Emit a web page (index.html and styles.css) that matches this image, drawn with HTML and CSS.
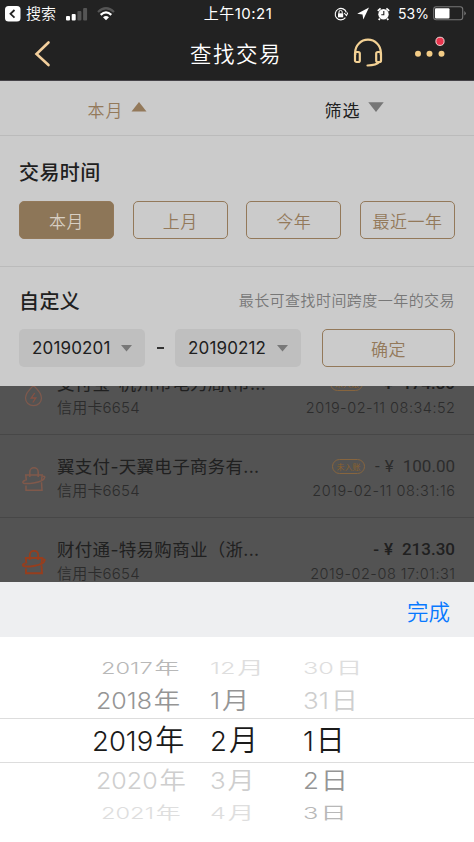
FILE: index.html
```html
<!DOCTYPE html>
<html lang="zh-CN">
<head>
<meta charset="utf-8">
<title>查找交易</title>
<link rel="stylesheet" href="styles.css">
</head>
<body>
<div class="phone">
  <header class="top">
    <div class="status">
      <div class="status-left">
        <svg width="16" height="16" viewBox="0 0 16 16"><rect width="15.5" height="15.5" rx="3.5" fill="#fff"/><path d="M9.5 4 5.5 7.8l4 3.8" fill="none" stroke="#222" stroke-width="1.8"/></svg>
        <span class="search">搜索</span>
        <svg class="signal" width="22" height="14" viewBox="0 0 22 14"><rect y="9" width="4" height="4.5" rx="1" fill="#fff"/><rect x="5.7" y="7" width="4" height="6.5" rx="1" fill="#fff"/><rect x="11.4" y="4" width="4" height="9.5" rx="1" fill="#555"/><rect x="17.1" y="1" width="4" height="12.5" rx="1" fill="#555"/></svg>
        <svg class="wifi" width="18" height="14" viewBox="0 0 18 14"><path d="M1 5q8-7.5 16 0" fill="none" stroke="#555" stroke-width="2.2"/><path d="M3.7 7.9q5.3-4.9 10.6 0" fill="none" stroke="#fff" stroke-width="2.2"/><path d="M6 10.2q3-2.5 6 0l-3 3z" fill="#fff"/></svg>
      </div>
      <span class="clock">上午10:21</span>
      <div class="status-right">
        <svg width="14" height="14" viewBox="0 0 14 14" fill="none" stroke="#fff"><path d="M11.4 10.7A5.7 5.7 0 1 1 12.4 5.5" stroke-width="1.1"/><path d="m10.2 6 2.2 2.5L14 5.6" stroke-width="1.1"/><rect x="4" y="6.3" width="5.2" height="4" fill="#fff" stroke="none"/><path d="M5 6.5V5a1.6 1.6 0 0 1 3.2 0v1.5"/></svg>
        <svg class="arrow" width="12" height="13" viewBox="0 0 12 13"><path d="M12 .5.2 6.8l5.3.6.8 5.1z" fill="#fff"/></svg>
        <svg class="alarm" width="13" height="14" viewBox="0 0 13 14"><circle cx="6.5" cy="7.3" r="5.2" fill="#fff"/><path d="M.8 3.8 3.6 1.3M9.4 1.3l2.8 2.5M2.8 11.5l-1 1.5M10.2 11.5l1 1.5" stroke="#fff" stroke-width="1.8"/><path d="M6.8 4v3.8H4.3" fill="none" stroke="#222" stroke-width="1.1"/></svg>
        <span class="percent">53%</span>
        <svg class="battery" width="34" height="15" viewBox="0 0 34 15"><rect x=".7" y=".8" width="29" height="13" rx="2.5" fill="none" stroke="#777" stroke-width="1.1"/><rect x="2" y="2.2" width="14.5" height="10.2" rx="1" fill="#fff"/><path d="M31.3 5q3 2.3 0 4.6z" fill="#777"/></svg>
      </div>
    </div>
    <nav class="nav">
      <svg class="back" width="18" height="28" viewBox="0 0 18 28"><path d="M14.5 2.5 2.5 14l12 11" fill="none" stroke="#f3cf9d" stroke-width="2.6" stroke-linecap="round"/></svg>
      <h1>查找交易</h1>
      <svg class="headset" width="30" height="30" viewBox="0 0 30 30" fill="none" stroke="#f3d194" stroke-width="2.2"><path d="M2.2 17v-2.5a12.8 12.8 0 0 1 25.6 0V17"/><rect x="2" y="14" width="4.8" height="10" rx="1.6"/><rect x="23.2" y="14" width="4.8" height="10" rx="1.6"/><path d="M26.3 24q-2.8 3.3-11.8 3.5" stroke-linecap="round"/></svg>
      <svg class="more" width="32" height="24" viewBox="0 0 32 24"><g fill="#f3cc86"><circle cx="4" cy="17.7" r="3"/><circle cx="15.5" cy="17.7" r="3"/><circle cx="27.5" cy="17.7" r="3"/></g><circle cx="26" cy="5.3" r="4.1" fill="#e9354e" stroke="#f4d9d9" stroke-width="1"/></svg>
    </nav>
  </header>

  <section class="panel">
    <div class="tabs">
      <div class="tab active"><span>本月</span><svg width="16" height="10" viewBox="0 0 16 10"><path d="m8 0 7.5 9.5H.5z" fill="#93795a"/></svg></div>
      <div class="tab"><span>筛选</span><svg width="16" height="10" viewBox="0 0 16 10"><path d="M.3.3h15.4L8 10z" fill="#767676"/></svg></div>
    </div>
    <h2 class="time-title">交易时间</h2>
    <div class="ranges">
      <button class="selected">本月</button><button>上月</button><button>今年</button><button>最近一年</button>
    </div>
    <div class="custom">
      <div class="custom-head"><h2>自定义</h2><span>最长可查找时间跨度一年的交易</span></div>
      <div class="dates">
        <div class="date"><span>20190201</span><svg width="11" height="7" viewBox="0 0 11 7"><path d="M0 0h11L5.5 6.5z" fill="#787878"/></svg></div>
        <span class="dash"></span>
        <div class="date"><span>20190212</span><svg width="11" height="7" viewBox="0 0 11 7"><path d="M0 0h11L5.5 6.5z" fill="#787878"/></svg></div>
        <button class="confirm">确定</button>
      </div>
    </div>
  </section>

  <section class="list">
    <article class="row pending">
      <svg class="icon" width="24" height="26" viewBox="0 0 24 26" fill="none" stroke="#7d594d" stroke-width="1.3"><path d="M11.5 1.5Q3.5 9 3.5 14a8 7.7 0 0 0 16 0q0-5-8-12.5z"/><path d="m12.7 9-3.5 5h4.6l-3 4.5" stroke="#865244"/></svg>
      <div class="info"><strong>支付宝-杭州市电力局(市...</strong><span>信用卡6654</span></div>
      <div class="cost"><div><em>未入账</em><b><i>-</i>¥<u>174.30</u></b></div><time>2019-02-11 08:34:52</time></div>
    </article>
    <article class="row pending">
      <svg class="icon" width="24" height="26" viewBox="0 0 24 26" fill="none" stroke="#80594b" stroke-width="1.5"><path d="M4.3 13.5 3.8 8h16.4l-.6 5M4 18.5v4.8h16l-.5-8M7.8 10V5a4.2 4.2 0 0 1 8.4 0v5"/><path d="M3.6 13.3Q.4 14.1 1 15.6c.5 2 20.6.7 21.7-5.2.3-1-1-1.2-2.2-1.2"/></svg>
      <div class="info"><strong>翼支付-天翼电子商务有...</strong><span>信用卡6654</span></div>
      <div class="cost"><div><em>未入账</em><b><i>-</i>¥<u>100.00</u></b></div><time>2019-02-11 08:31:16</time></div>
    </article>
    <article class="row">
      <svg class="icon" width="24" height="26" viewBox="0 0 24 26" fill="none" stroke="#963e1e" stroke-width="1.9"><path d="M4.3 13.5 3.8 8h16.4l-.6 5M4 18.5v4.8h16l-.5-8M7.8 10V5a4.2 4.2 0 0 1 8.4 0v5"/><path d="M3.6 13.3Q.4 14.1 1 15.6c.5 2 20.6.7 21.7-5.2.3-1-1-1.2-2.2-1.2"/></svg>
      <div class="info"><strong>财付通-特易购商业（浙...</strong><span>信用卡6654</span></div>
      <div class="cost"><div><b><i>-</i>¥<u>213.30</u></b></div><time>2019-02-08 17:01:31</time></div>
    </article>
  </section>

  <section class="sheet">
    <div class="toolbar"><span>完成</span></div>
    <div class="picker">
      <div class="option far above"><span>2017<small>年</small></span><span>12<small>月</small></span><span>30<small>日</small></span></div>
      <div class="option near above"><span>2018<small>年</small></span><span>1<small>月</small></span><span>31<small>日</small></span></div>
      <div class="option current"><span>2019<small>年</small></span><span>2<small>月</small></span><span>1<small>日</small></span></div>
      <div class="option near below"><span>2020<small>年</small></span><span>3<small>月</small></span><span>2<small>日</small></span></div>
      <div class="option far below"><span>2021<small>年</small></span><span>4<small>月</small></span><span>3<small>日</small></span></div>
    </div>
  </section>
</div>
</body>
</html>
```
FILE: styles.css
```css
* { box-sizing: border-box; }
body { margin: 0; background: #fff; font-family: Inter, "Noto Sans CJK SC", sans-serif; }
h1, h2 { margin: 0; font-weight: 400; }
svg { display: block; flex: none; }
button { font: inherit; padding: 0; background: none; }
.phone { width: 474px; height: 842px; display: flex; flex-direction: column; overflow: hidden; }

.top { height: 81px; flex: none; background: #222; color: #fff; border-bottom: 1px solid #454348; }
.status { height: 27px; display: grid; grid-template-columns: 1fr auto 1fr; align-items: center; padding: 0 7px 0 5px; font-size: 14px; }
.status-left, .status-right { display: flex; align-items: center; }
.status-right { justify-content: flex-end; }
.search { margin-left: 5px; font-size: 15px; line-height: 20px; font-weight: 350; }
.signal { margin-left: 10px; }
.wifi { margin-left: 9px; }
.clock { font-size: 15px; letter-spacing: .5px; line-height: 20px; padding-left: 4px; }
.arrow { margin-left: 9px; }
.alarm { margin-left: 8px; }
.percent { margin-left: 8px; font-size: 14px; }
.battery { margin-left: 4px; }
.nav { height: 53px; display: grid; grid-template-columns: 156px 163px 30px 1fr; align-items: center; padding: 0 28px 0 34px; }
.nav h1 { font-size: 21.5px; letter-spacing: 1.5px; line-height: 30px; font-weight: 350; }
.headset { margin-top: -2px; }
.more { justify-self: end; margin-top: -12px; }

.panel { height: 305px; flex: none; background: #cbcbcb; color: #202020; }
.tabs { height: 55px; display: grid; grid-template-columns: 1fr 1fr; border-bottom: 1px solid #bbb; }
.tab { display: flex; align-items: center; justify-content: center; gap: 7px; font-size: 17px; letter-spacing: 1px; padding: 2px 3px 0 0; }
.tab svg { margin-top: -5px; }
.active { color: #93795a; font-weight: 350; }
h2 { font-size: 20px; line-height: 28px; letter-spacing: .4px; font-weight: 500; }
.time-title { padding: 23px 19px 0; height: 65px; }
.ranges { display: grid; grid-template-columns: repeat(4, 95px); justify-content: space-between; padding: 0 19px; }
.ranges button, .confirm { height: 38px; border: 1.5px solid #93795a; border-radius: 5px; color: #93795a; font-size: 17px; font-weight: 350; letter-spacing: .5px; }
.ranges .selected { background: #8d7658; color: #d8cfc3; }
.custom { margin-top: 27px; padding: 21px 19px 0; border-top: 1px solid #bbb; }
.custom-head { height: 41px; display: flex; justify-content: space-between; align-items: flex-start; }
.custom-head span { color: #777; font-size: 15px; line-height: 26px; letter-spacing: .45px; font-weight: 350; }
.dates { display: grid; grid-template-columns: 126px 30px 126px 1fr; align-items: center; }
.date { height: 38px; border-radius: 5px; background: #bfbfbf; display: flex; align-items: center; justify-content: space-between; padding: 0 13px; font-size: 17px; letter-spacing: .15px; }
.dash { width: 7px; height: 2px; background: #333; justify-self: center; }
.confirm { margin-left: 21px; }

.list { height: 196px; flex: none; overflow: hidden; background: #535353; color: #202020; }
.row { height: 83.5px; display: grid; grid-template-columns: 38px 1fr auto; padding: 19px 19px 0; border-bottom: 1px solid #474747; }
.row:first-child { margin-top: -35px; padding-top: 20px; }
.icon { margin: 13px 0 0 3px; }
.info, .cost { display: flex; flex-direction: column; }
.info strong { font-size: 17.5px; font-weight: 400; line-height: 25px; white-space: nowrap; letter-spacing: .3px; }
.info span { color: #2c2c2c; font-size: 15px; line-height: 24px; font-weight: 350; letter-spacing: .2px; }
.cost { align-items: flex-end; }
.cost div { height: 25px; display: flex; align-items: center; }
em { width: 33px; height: 15px; margin-right: 10px; border: 1px solid #87653e; border-radius: 8px; color: #8b612c; font: normal 8px/13px "Noto Sans CJK SC", sans-serif; text-align: center; }
b { font: 500 17px/25px Roboto, sans-serif; letter-spacing: 0; }
b i { font-style: normal; margin-right: 5px; }
b u { text-decoration: none; margin-left: 9px; }
.pending b { color: #2c2c2c; font-weight: 400; }
.row:first-child b { color: #202020; font-weight: 500; }
time { color: #2c2c2c; font-size: 14.5px; font-weight: 350; line-height: 24px; letter-spacing: .5px; margin-right: -.5px; }

.sheet { flex: 1; background: #fff; }
.toolbar { height: 55px; padding: 1px 24px 0; display: flex; align-items: center; justify-content: flex-end; background: #eeeff1; color: #0879ff; font-size: 21.5px; font-weight: 350; }
.picker { padding-top: 14px; }
.option { display: grid; grid-template-columns: 118px 93px 1fr; align-items: center; padding-left: 92px; font-size: 27.5px; font-weight: 350; line-height: 40px; color: #1a1a1a; }
.option span { display: flex; align-items: center; transform-origin: left center; white-space: nowrap; }
small { font-size: 29px; margin-left: 2px; }
.current { height: 45px; border: 1px solid #ddd; border-width: 1px 0; }
.near { height: 35px; color: #cecece; }
.far { height: 32px; color: #dedede; }
.near span { transform: translateY(-2px) scale(.94, .84); }
.far span { transform: translateY(-3px) scale(.92, .59); }
.near span:first-child { transform: translate(4px, -2px) scale(.91, .84); }
.far span:first-child { transform: translate(9px, -3px) scale(.86, .59); }
.near.above span:first-child, .near.above span:nth-child(2), .near.below span:last-child { color: #959595; }
.far.above span:first-child { color: #b8b8b8; }
.far.below span:last-child { color: #b8b8b8; }
.far.below { margin-top: -2px; }
```
